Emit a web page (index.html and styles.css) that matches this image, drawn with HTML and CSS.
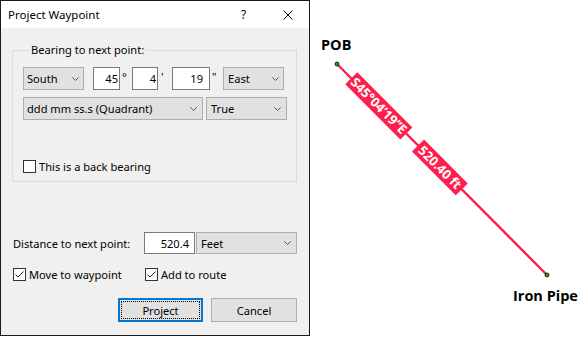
FILE: index.html
```html
<!DOCTYPE html>
<html>
<head>
<meta charset="utf-8">
<title>Project Waypoint</title>
<link rel="stylesheet" href="styles.css">
</head>
<body>
<div class="dialog">
  <div class="titlebar">
    <span class="title">Project Waypoint</span>
    <span class="help">?</span>
    <svg class="close" width="10" height="10" viewBox="0 0 10 10"><path d="M0.5 0.5L9.5 9.5M9.5 0.5L0.5 9.5" stroke="#000" stroke-width="1" fill="none"/></svg>
  </div>
  <div class="content">
    <fieldset class="group">
      <legend>Bearing to next point:</legend>
      <div class="row r1">
        <div class="combo w-south"><span>South</span><svg class="chev" width="7" height="4" viewBox="0 0 7 4"><path d="M0.3 0.3L3.5 3.5L6.7 0.3" stroke="#555" stroke-width="1" fill="none"/></svg></div>
        <div class="edit w-deg">45</div><span class="unit u1">°</span>
        <div class="edit w-min">4</div><span class="unit u2">'</span>
        <div class="edit w-sec">19</div><span class="unit u3">"</span>
        <div class="combo w-east"><span>East</span><svg class="chev" width="7" height="4" viewBox="0 0 7 4"><path d="M0.3 0.3L3.5 3.5L6.7 0.3" stroke="#555" stroke-width="1" fill="none"/></svg></div>
      </div>
      <div class="row r2">
        <div class="combo w-fmt"><span>ddd mm ss.s (Quadrant)</span><svg class="chev" width="7" height="4" viewBox="0 0 7 4"><path d="M0.3 0.3L3.5 3.5L6.7 0.3" stroke="#555" stroke-width="1" fill="none"/></svg></div>
        <div class="combo w-true"><span>True</span><svg class="chev" width="7" height="4" viewBox="0 0 7 4"><path d="M0.3 0.3L3.5 3.5L6.7 0.3" stroke="#555" stroke-width="1" fill="none"/></svg></div>
      </div>
      <div class="check back"><span class="box"></span><span>This is a back bearing</span></div>
    </fieldset>
    <div class="dist-row">
      <span class="dist-label">Distance to next point:</span>
      <div class="edit w-dist">520.4</div>
      <div class="combo w-feet"><span>Feet</span><svg class="chev" width="7" height="4" viewBox="0 0 7 4"><path d="M0.3 0.3L3.5 3.5L6.7 0.3" stroke="#555" stroke-width="1" fill="none"/></svg></div>
    </div>
    <div class="checks">
      <div class="check first"><span class="box"><svg width="11" height="11" viewBox="0 0 11 11"><path d="M1.5 5.5L4 8L9.5 2.5" stroke="#222" stroke-width="1" fill="none"/></svg></span><span>Move to waypoint</span></div>
      <div class="check"><span class="box"><svg width="11" height="11" viewBox="0 0 11 11"><path d="M1.5 5.5L4 8L9.5 2.5" stroke="#222" stroke-width="1" fill="none"/></svg></span><span>Add to route</span></div>
    </div>
    <div class="buttons">
      <div class="btn default"><span>Project</span></div>
      <div class="btn cancel"><span>Cancel</span></div>
    </div>
  </div>
</div>
<svg class="canvas" width="277" height="337" viewBox="310 0 277 337">
  <line x1="337" y1="64" x2="547" y2="275" stroke="#ff1e4c" stroke-width="2.4"/>
  <g transform="translate(378.8 105.8) rotate(45.14)">
    <rect x="-39" y="-8.5" width="78" height="17" fill="#ff1e4c"/>
    <text x="0" y="4.6" text-anchor="middle" class="lbl">S45°04’19”E</text>
  </g>
  <g transform="translate(439.9 167.4) rotate(45.14)">
    <rect x="-31" y="-8.5" width="62" height="17" fill="#ff1e4c"/>
    <text x="0" y="4.6" text-anchor="middle" class="lbl">520.40 ft</text>
  </g>
  <circle cx="337" cy="64" r="2" fill="#00c000" stroke="#000" stroke-width="0.8"/>
  <circle cx="547" cy="275" r="2" fill="#00c000" stroke="#000" stroke-width="0.8"/>
  <text x="321" y="50" class="pt">POB</text>
  <text x="513" y="301" class="pt">Iron Pipe</text>
</svg>
</body>
</html>
```

FILE: styles.css
```css
* { box-sizing: border-box; }
html, body { margin: 0; padding: 0; background: #fff; }
body {
  display: flex;
  align-items: flex-start;
  font-family: "Noto Sans", "Open Sans", sans-serif;
  font-size: 11.1px;
  color: #000;
}
.dialog {
  width: 310px;
  height: 336px;
  border: 1px solid #1a1a1a;
  background: #f0f0f0;
  display: flex;
  flex-direction: column;
  flex: none;
}
.titlebar {
  height: 27px;
  background: #fff;
  display: flex;
  align-items: center;
  padding: 0 16px 0 7px;
}
.title { flex: 1; font-size: 11.5px; }
.help { width: 7px; margin-right: 35px; font-size: 12px; }
.close { display: block; }
.content { padding: 14px 12px 0 11px; display: flex; flex-direction: column; }
.group {
  margin: 0;
  border: 1px solid #dcdcdc;
  padding: 9px 0 8px 10px;
  min-width: 0;
}
.group legend {
  padding: 0 2px;
  margin-left: 6px;
  line-height: 16px;
}
.row { display: flex; height: 23px; }
.r2 { margin-top: 7px; gap: 3px; }
.combo {
  height: 100%;
  background: #e1e1e1;
  border: 1px solid #adadad;
  display: flex;
  align-items: center;
  justify-content: space-between;
  padding: 0 4px 0 3px;
  flex: none;
}
.combo .chev { display: block; }
.edit {
  height: 100%;
  background: #fff;
  border: 1px solid #7a7a7a;
  display: flex;
  align-items: center;
  justify-content: flex-end;
  padding-right: 1px;
  flex: none;
}
.unit { display: flex; align-items: flex-start; padding-top: 2px; padding-left: 2px; flex: none; }
.w-south { width: 61px; margin-right: 9px; }
.w-deg { width: 27px; }
.u1 { width: 12px; }
.w-min { width: 26px; }
.u2 { width: 14px; padding-left: 3px; }
.w-sec { width: 38px; padding-right: 6px; }
.u3 { width: 13px; }
.w-east { width: 61px; padding-left: 4px; }
.w-fmt { width: 180px; padding-right: 5px; }
.w-true { width: 81px; padding-left: 4px; padding-right: 5px; }
.check { display: flex; align-items: center; height: 13px; gap: 3px; }
.back { margin-top: 40px; }
.box {
  width: 13px;
  height: 13px;
  border: 1px solid #333;
  background: #fff;
  flex: none;
  display: flex;
}
.box svg { display: block; }
.dist-row { display: flex; height: 22px; margin-top: 50px; align-items: center; }
.dist-label { width: 133px; padding-left: 1px; }
.w-dist { width: 51px; padding-right: 5px; }
.w-feet { width: 101px; margin-left: 1px; padding-right: 5px; padding-left: 4px; }
.checks { display: flex; margin-top: 14px; padding-left: 1px; }
.checks .first { width: 132px; }
.buttons { display: flex; justify-content: flex-end; gap: 8px; margin-top: 17px; }
.btn {
  height: 24px;
  background: #e1e1e1;
  border: 1px solid #adadad;
  display: flex;
  align-items: center;
  justify-content: center;
}
.btn.default {
  width: 85px;
  border: 2px solid #0078d7;
  outline: 1px dotted #000;
  outline-offset: -4px;
}
.btn.cancel { width: 86px; }
.canvas { display: block; flex: none; }
.canvas .lbl {
  font-family: "Open Sans", "Noto Sans", sans-serif;
  font-weight: 700;
  font-size: 13px;
  fill: #fff;
}
.canvas .pt {
  font-family: "Open Sans", "Noto Sans", sans-serif;
  font-weight: 700;
  font-size: 14.5px;
  fill: #000;
}
```
